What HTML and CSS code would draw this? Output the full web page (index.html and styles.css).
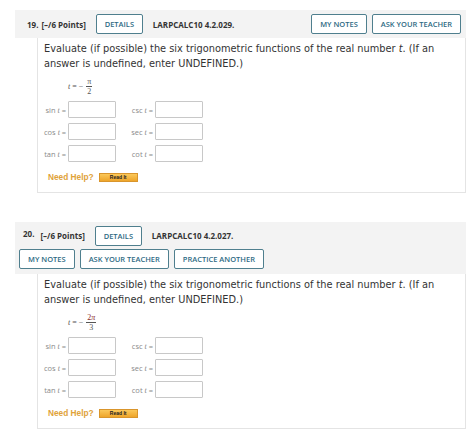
FILE: index.html
```html
<!DOCTYPE html>
<html>
<head>
<meta charset="utf-8">
<link rel="stylesheet" href="styles.css">
</head>
<body>
<div class="question q1">
  <div class="head">
    <span class="num">19.</span>
    <span class="pts">[–/6 Points]</span>
    <span class="btn details">DETAILS</span>
    <span class="code">LARPCALC10 4.2.029.</span>
    <span class="spacer"></span>
    <span class="btn">MY NOTES</span>
    <span class="btn">ASK YOUR TEACHER</span>
  </div>
  <div class="body">
    <p class="prompt"><span>Evaluate (if possible) the six trigonometric functions of the real number </span><i>t</i><span>. (If an </span><span>answer is undefined, enter UNDEFINED.)</span></p>
    <div class="math">
      <span class="eq"><i>t</i> = −</span>
      <span class="frac"><span class="numr">π</span><span class="den">2</span></span>
    </div>
    <div class="grid">
      <span class="lbl">sin <i>t</i> =</span><span class="inp"></span>
      <span class="lbl">csc <i>t</i> =</span><span class="inp"></span>
      <span class="lbl">cos <i>t</i> =</span><span class="inp"></span>
      <span class="lbl">sec <i>t</i> =</span><span class="inp"></span>
      <span class="lbl">tan <i>t</i> =</span><span class="inp"></span>
      <span class="lbl">cot <i>t</i> =</span><span class="inp"></span>
    </div>
    <div class="help">
      <span class="need">Need Help?</span>
      <span class="readit">Read It</span>
    </div>
  </div>
</div>

<div class="question q2">
  <div class="head head2">
    <div class="row1">
      <span class="num num2">20.</span>
      <span class="pts">[–/6 Points]</span>
      <span class="btn details">DETAILS</span>
      <span class="code">LARPCALC10 4.2.027.</span>
    </div>
    <div class="row2">
      <span class="btn">MY NOTES</span>
      <span class="btn">ASK YOUR TEACHER</span>
      <span class="btn">PRACTICE ANOTHER</span>
    </div>
  </div>
  <div class="body body2">
    <p class="prompt"><span>Evaluate (if possible) the six trigonometric functions of the real number </span><i>t</i><span>. (If an </span><span>answer is undefined, enter UNDEFINED.)</span></p>
    <div class="math">
      <span class="eq"><i>t</i> = −</span>
      <span class="frac"><span class="numr red">2<i>π</i></span><span class="den">3</span></span>
    </div>
    <div class="grid">
      <span class="lbl">sin <i>t</i> =</span><span class="inp"></span>
      <span class="lbl">csc <i>t</i> =</span><span class="inp"></span>
      <span class="lbl">cos <i>t</i> =</span><span class="inp"></span>
      <span class="lbl">sec <i>t</i> =</span><span class="inp"></span>
      <span class="lbl">tan <i>t</i> =</span><span class="inp"></span>
      <span class="lbl">cot <i>t</i> =</span><span class="inp"></span>
    </div>
    <div class="help">
      <span class="need">Need Help?</span>
      <span class="readit">Read It</span>
    </div>
  </div>
</div>
</body>
</html>
```

FILE: styles.css
```css
html, body {
  margin: 0;
  padding: 0;
  background: #ffffff;
}
body {
  font-family: "Open Sans", "DejaVu Sans", sans-serif;
  color: #333333;
}
.question {
  margin-left: 15px;
  width: 451px;
}
.q1 {
  margin-top: 10px;
}
.q2 {
  margin-top: 29px;
}
.head {
  background: #f3f3f3;
  height: 28px;
  display: flex;
  align-items: center;
  padding: 0 5px 0 12px;
  box-sizing: border-box;
  font-size: 8px;
  font-weight: 700;
  color: #333;
}
.num {
  margin-right: 3px;
}
.pts {
  margin-right: 10px;
}
.code {
  margin-left: 10px;
}
.spacer {
  flex: 1;
}
.btn {
  display: inline-flex;
  align-items: center;
  justify-content: center;
  height: 20px;
  box-sizing: border-box;
  padding: 0 8px;
  border: 1px solid #4f7f8e;
  border-radius: 2px;
  background: #ffffff;
  color: #2d6a83;
  font-size: 7.5px;
  font-weight: 600;
  margin-left: 5px;
}
.details {
  margin-left: 0;
  width: 47px;
  padding: 0;
}
.head2 {
  height: 52px;
  display: block;
  padding: 0;
}
.row1 {
  display: flex;
  align-items: center;
  height: 27px;
  padding-left: 8px;
  box-sizing: border-box;
}
.num2 {
  position: relative;
  top: -2px;
  margin-right: 6px;
}
.row2 {
  display: flex;
  align-items: center;
  padding-left: 4px;
}
.row2 .btn {
  height: 20px;
  margin-left: 0;
  margin-right: 5px;
  padding: 0 8px;
}
.body {
  margin-left: 22px;
  border: 1px solid #e4e4e4;
  border-top: none;
  padding: 3px 0 10px 6px;
}
.prompt {
  margin: 0;
  font-family: "DejaVu Sans", Verdana, sans-serif;
  font-size: 9.8px;
  line-height: 15px;
  color: #333;
  width: 400px;
}
.prompt i {
  font-style: italic;
}
.math {
  display: flex;
  align-items: center;
  margin: 4px 0 4px 24px;
  height: 22px;
  font-family: "Liberation Serif", "DejaVu Serif", serif;
  font-size: 8px;
  color: #555;
}
.eq {
  margin-right: 3px;
}
.frac {
  display: inline-flex;
  flex-direction: column;
  align-items: center;
  line-height: 9px;
}
.numr {
  border-bottom: 1px solid #555;
  padding: 0 1px;
}
.red {
  color: #8a2a2a;
}
.grid {
  display: grid;
  grid-template-columns: 22px 48px 35px 48px;
  column-gap: 2px;
  row-gap: 5px;
  grid-auto-rows: 17px;
  align-items: center;
}
.lbl {
  font-size: 7.5px;
  color: #8a8a8a;
  text-align: right;
  white-space: nowrap;
}
.lbl i {
  font-family: "Liberation Serif", serif;
  font-size: 8px;
}
.inp {
  height: 17px;
  box-sizing: border-box;
  border: 1px solid #c8c8c8;
  border-radius: 1px;
  background: #fff;
}
.help {
  display: flex;
  align-items: center;
  margin-top: 10px;
  margin-left: 4px;
  gap: 5px;
}
.need {
  font-family: "Liberation Sans", Arial, sans-serif;
  font-weight: 700;
  font-size: 8.3px;
  color: #e0a23a;
}
.readit {
  display: inline-flex;
  align-items: center;
  justify-content: center;
  width: 39px;
  height: 9px;
  box-sizing: border-box;
  background: linear-gradient(#fbc85a, #eea52a);
  border: 1px solid #d9952c;
  font-family: "Liberation Sans", Arial, sans-serif;
  font-weight: 700;
  font-size: 5px;
  color: #222;
}
```
